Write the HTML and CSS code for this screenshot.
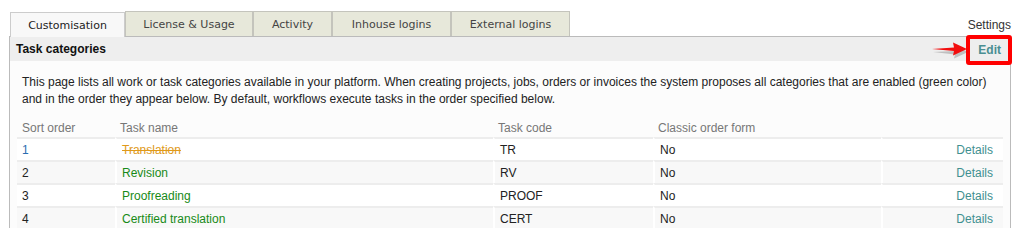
FILE: index.html
```html
<!DOCTYPE html>
<html lang="en">
<head>
<meta charset="UTF-8" />
<title>Task categories</title>
<link rel="stylesheet" href="styles.css">
</head>
<body>

<div class="topbar">
  <ul class="tabs">
    <li class="tab active">Customisation</li>
    <li class="tab">License &amp; Usage</li>
    <li class="tab">Activity</li>
    <li class="tab">Inhouse logins</li>
    <li class="tab">External logins</li>
  </ul>
  <div class="settings">Settings</div>
</div>

<div class="panel">
  <div class="panel-head">
    <span class="panel-title">Task categories</span>
    <span class="edit-wrap">
      <svg class="arrow" width="38" height="18" viewBox="0 0 38 18">
        <path d="M1 10 L23 9 L22 3.5 L36 10 L22 16.5 L23 12.5 Z" fill="#888" opacity="0.45" transform="translate(1,1)"/>
        <path d="M1 8 L23 6.5 L22 1.5 L36 8 L22 14.5 L23 10 Z" fill="#f20d0d"/>
      </svg>
      <a class="edit">Edit</a>
    </span>
  </div>

  <div class="panel-body">
    <p class="intro">This page lists all work or task categories available in your platform. When creating projects, jobs, orders or invoices the system proposes all categories that are enabled (green color) and in the order they appear below. By default, workflows execute tasks in the order specified below.</p>

    <table class="tasks">
      <thead>
        <tr><th class="c-sort">Sort order</th><th class="c-name">Task name</th><th class="c-code">Task code</th><th class="c-form">Classic order form</th><th class="c-det"></th></tr>
      </thead>
      <tbody>
        <tr><td class="first">1</td><td class="disabled">Translation</td><td>TR</td><td>No</td><td class="det"><a>Details</a></td></tr>
        <tr><td>2</td><td class="enabled">Revision</td><td>RV</td><td>No</td><td class="det"><a>Details</a></td></tr>
        <tr><td>3</td><td class="enabled">Proofreading</td><td>PROOF</td><td>No</td><td class="det"><a>Details</a></td></tr>
        <tr><td>4</td><td class="enabled">Certified translation</td><td>CERT</td><td>No</td><td class="det"><a>Details</a></td></tr>
      </tbody>
    </table>
  </div>
</div>

</body>
</html>
```

FILE: styles.css
```css
body {
  margin: 0;
  padding: 11px 9px 0 9px;
  background-color: #fff;
  color: #222;
  font-family: "Liberation Sans", Arial, sans-serif;
  font-size: 12px;
}
.topbar {
  display: flex;
  justify-content: space-between;
  align-items: flex-end;
}
.tabs {
  display: flex;
  list-style: none;
  margin: 0 0 0 1px;
  padding: 0;
}
.tab {
  box-sizing: border-box;
  font-family: "DejaVu Sans", Verdana, sans-serif;
  font-size: 11px;
  color: #444;
  background-color: #e7e8da;
  border: 1px solid #c4c4bc;
  border-bottom: none;
  height: 25px;
  line-height: 25px;
  text-align: center;
}
.tab:nth-child(1) { width: 115px; }
.tab:nth-child(2) { width: 128px; }
.tab:nth-child(3) { width: 79px; }
.tab:nth-child(4) { width: 119px; }
.tab:nth-child(5) { width: 119px; }
.tab.active {
  background-color: #f8f8f8;
  color: #222;
  border-color: #ccc;
  position: relative;
  top: 1px;
}
.settings {
  font-size: 12px;
  color: #333;
  padding-bottom: 4px;
}
.panel {
  width: 1000px;
  border: 1px solid #bbb;
  border-bottom: none;
}
.panel-head {
  background-color: #eee;
  height: 24px;
  display: flex;
  justify-content: space-between;
  align-items: center;
  padding: 0 0 0 6px;
}
.panel-title {
  font-weight: bold;
  font-size: 12px;
  color: #111;
}
.edit-wrap {
  display: flex;
  align-items: center;
}
.arrow {
  margin-right: -3px;
  margin-top: 1px;
}
.edit {
  font-weight: bold;
  color: #4a8e92;
  font-size: 12px;
  border: 4px solid #f00;
  border-radius: 3px;
  padding: 4px 7px 4px 8px;
  margin-right: -2px;
  margin-top: 2px;
}
.panel-body {
  background-color: #fcfcfc;
  padding: 13px 7px 0 7px;
}
.intro {
  margin: 0 0 9px 5px;
  line-height: 17px;
  color: #222;
}
.tasks {
  width: 986px;
  border-collapse: separate;
  border-spacing: 0;
}
.tasks th {
  font-weight: normal;
  color: #777;
  text-align: left;
  padding: 4px 5px 2px 5px;
  height: 13px;
}
.tasks td {
  padding: 3px 5px 3px 5px;
  height: 15px;
  border-top: 2px solid #ededed;
  border-left: 2px solid #fff;
  color: #222;
}
.tasks td:first-child { border-left: none; }
.tasks tbody tr:nth-child(odd) td { background-color: #fff; }
.tasks tbody tr:nth-child(even) td { background-color: #f8f8f8; }
.c-sort { width: 88px; }
.c-name { width: 368px; }
.c-code { width: 150px; }
.c-form { width: 218px; }
.tasks td.first { color: #2a6db0; }
.tasks td.disabled {
  color: #e09a1a;
  text-decoration: line-through;
}
.tasks td.enabled { color: #178a17; }
.tasks td.det {
  text-align: right;
  padding-right: 10px;
}
.det a { color: #3f9090; }
```
